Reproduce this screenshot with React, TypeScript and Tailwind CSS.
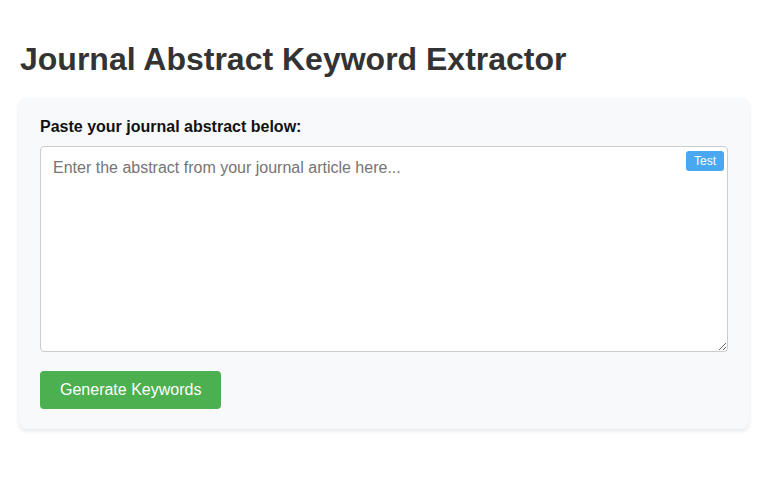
import { useState } from "react";

export default function App() {
  const [abstract, setAbstract] = useState("");

  return (
    <div className="min-h-screen bg-white px-[20px] pt-[41px] font-['Liberation_Sans',Arial,sans-serif]">
      <h1 className="mb-[20px] text-[32px] font-bold leading-[37px] text-[#333]">
        Journal Abstract Keyword Extractor
      </h1>
      <div className="w-[730px] -ml-px rounded-lg bg-[#f8f9fa] p-[20px] pl-[21px] shadow-[0_2px_4px_rgba(0,0,0,0.1)]">
        <label className="mb-[10px] block text-base font-bold leading-[18px] text-[#111]">
          Paste your journal abstract below:
        </label>
        <div className="relative mb-[19px] flex">
          <textarea
            value={abstract}
            onChange={(e) => setAbstract(e.target.value)}
            placeholder="Enter the abstract from your journal article here..."
            className="block h-[206px] w-[688px] rounded border border-[#ccc] bg-white px-[12px] pt-[12px] pb-[10px] text-base leading-[18px] text-[#333] placeholder-[#757575] outline-none"
          />
          <span className="absolute right-[5px] top-[5px] rounded-[3px] bg-[#4aa8f0] px-[8px] py-[2px] text-xs leading-[16px] text-white">
            Test
          </span>
        </div>
        <button
          type="button"
          className="h-[38px] rounded bg-[#4caf50] px-[20px] text-base text-white hover:bg-[#45a049]"
        >
          Generate Keywords
        </button>
      </div>
    </div>
  );
}
